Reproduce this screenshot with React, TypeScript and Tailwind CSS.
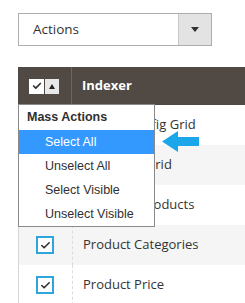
import { Check } from "lucide-react";

const rows = [
  { label: "Design Config Grid", checked: false },
  { label: "Customer Grid", checked: false },
  { label: "Category Products", checked: false },
  { label: "Product Categories", checked: true },
  { label: "Product Price", checked: true },
];

const menuItems = ["Select All", "Unselect All", "Select Visible", "Unselect Visible"];

function RowCheckbox() {
  return (
    <div className="w-[18px] h-[18px] border-2 border-[#2fa5e0] bg-white flex items-center justify-center">
      <Check size={11} strokeWidth={3.5} className="text-[#303030]" />
    </div>
  );
}

export default function App() {
  return (
    <div className="relative w-[245px] h-[303px] overflow-hidden bg-white font-['Open_Sans',sans-serif] text-[#333]">
      <div className="pl-[18px] pt-[13px]">
        <div className="flex w-[194px] h-[33px] border border-[#adadad]">
          <div className="flex-1 flex items-center pl-[14px] text-[13.5px]">Actions</div>
          <div className="w-[33px] bg-[#e3e3e3] border-l border-[#c8c8c8] flex items-center justify-center">
            <div className="w-0 h-0 border-l-[4px] border-r-[4px] border-t-[5px] border-l-transparent border-r-transparent border-t-[#303030]" />
          </div>
        </div>
      </div>

      <div className="ml-[18px] mt-[21px]">
        <div className="flex h-[38px] bg-[#514943] text-white">
          <div className="w-[54px] border-r border-[#6e6560] flex items-center pl-[11px]">
            <div className="flex h-[15px]">
              <div className="w-[15px] bg-white flex items-center justify-center">
                <Check size={10} strokeWidth={4} className="text-[#303030]" />
              </div>
              <div className="ml-px w-[14px] bg-[#e8e8e8] flex items-center justify-center">
                <div className="w-0 h-0 border-l-[3.5px] border-r-[3.5px] border-b-[5px] border-l-transparent border-r-transparent border-b-[#222]" />
              </div>
            </div>
          </div>
          <div className="flex items-center pl-[10px] text-[13px] font-bold">Indexer</div>
        </div>
        {rows.map((row, i) => (
          <div
            key={row.label}
            className={`flex h-[40px] border-l border-[#d6d6d6] ${i % 2 === 1 ? "bg-[#f5f5f5]" : "bg-white"}`}
          >
            <div className="w-[54px] border-r border-dashed border-[#dcdcdc] flex items-center pl-[17px]">
              {row.checked && <RowCheckbox />}
            </div>
            <div className="flex items-center pl-[10px] text-[13px] whitespace-nowrap">{row.label}</div>
          </div>
        ))}
      </div>

      <div className="absolute left-[18px] top-[104px] w-[137px] h-[123px] bg-white border border-[#8a8a8a] font-['Liberation_Sans',sans-serif] text-[12.5px] text-[#303030]">
        <div className="h-[25px] flex items-center pl-[8px] font-bold">Mass Actions</div>
        {menuItems.map((item, i) => (
          <div
            key={item}
            className={`h-[24px] flex items-center pl-[26px] ${i === 0 ? "bg-[#3399ff] text-white" : ""}`}
          >
            {item}
          </div>
        ))}
      </div>

      <svg className="absolute left-[161px] top-[130px]" width="39" height="23" viewBox="0 0 39 23">
        <path d="M1 11.5 L17 1 L17 7 L38 7 L38 16 L17 16 L17 22 Z" fill="#1ba6ea" />
      </svg>
    </div>
  );
}
